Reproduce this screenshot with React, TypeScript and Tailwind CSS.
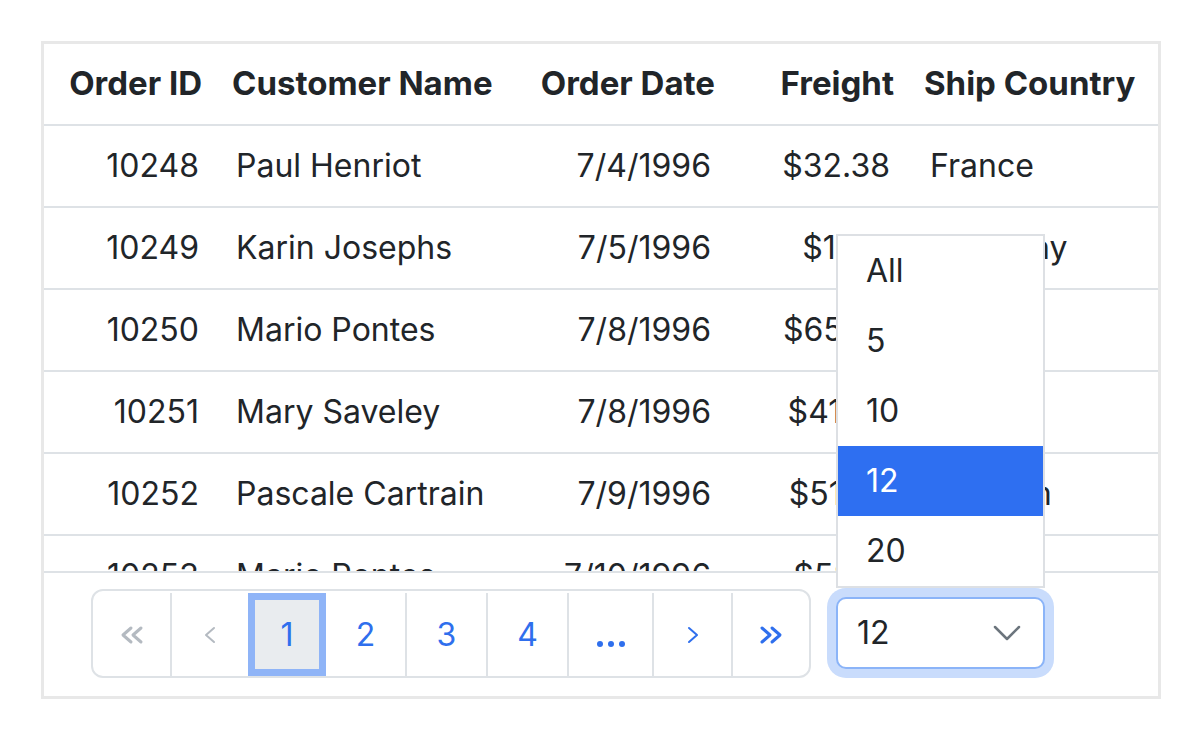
import React from 'react';

interface Order {
  id: number;
  customer: string;
  date: string;
  freight: string;
  country: string;
}

const orders: Order[] = [
  { id: 10248, customer: 'Paul Henriot', date: '7/4/1996', freight: '$32.38', country: 'France' },
  { id: 10249, customer: 'Karin Josephs', date: '7/5/1996', freight: '$11.61', country: 'Germany' },
  { id: 10250, customer: 'Mario Pontes', date: '7/8/1996', freight: '$65.83', country: 'Brazil' },
  { id: 10251, customer: 'Mary Saveley', date: '7/8/1996', freight: '$41.34', country: 'France' },
  { id: 10252, customer: 'Pascale Cartrain', date: '7/9/1996', freight: '$51.30', country: 'Belgium' },
  { id: 10253, customer: 'Mario Pontes', date: '7/10/1996', freight: '$58.17', country: 'Brazil' },
];

const pageSizes = ['All', '5', '10', '12', '20'];

const DoubleChevron: React.FC<{ dir: 'left' | 'right'; color: string }> = ({ dir, color }) => (
  <svg width="24" height="20" viewBox="0 0 24 20" fill="none" stroke={color} strokeWidth={3} strokeLinecap="round" strokeLinejoin="round">
    {dir === 'left' ? (
      <>
        <path d="M11 3 L3 10 L11 17" />
        <path d="M21 3 L13 10 L21 17" />
      </>
    ) : (
      <>
        <path d="M3 3 L11 10 L3 17" />
        <path d="M13 3 L21 10 L13 17" />
      </>
    )}
  </svg>
);

const SingleChevron: React.FC<{ dir: 'left' | 'right'; color: string }> = ({ dir, color }) => (
  <svg width="12" height="18" viewBox="0 0 12 18" fill="none" stroke={color} strokeWidth={2} strokeLinecap="round" strokeLinejoin="round">
    {dir === 'left' ? <path d="M10 2 L2 9 L10 16" /> : <path d="M2 2 L10 9 L2 16" />}
  </svg>
);

const App: React.FC = () => {
  const font = { fontFamily: 'Inter, "Noto Sans", sans-serif' };

  return (
    <div className="w-[1201px] h-[741px] bg-white pt-[41px] pl-[41px] text-[#212529]" style={font}>
      <div className="w-[1120px] h-[658px] border-[3px] border-[#e8e8e8] flex flex-col">
        {/* header */}
        <div className="flex h-[82px] border-b-2 border-[#dee2e6] text-[33px] font-bold items-center shrink-0">
          <div className="w-[172px] pr-[14px] text-right">Order ID</div>
          <div className="w-[292px] pl-[16px] whitespace-nowrap">Customer Name</div>
          <div className="w-[222px] pr-[15px] text-right">Order Date</div>
          <div className="w-[180px] pr-[16px] text-right">Freight</div>
          <div className="flex-1 pl-[14px] whitespace-nowrap">Ship Country</div>
        </div>

        {/* rows */}
        <div className="h-[445px] overflow-hidden shrink-0">
          {orders.map((o) => (
            <div key={o.id} className="flex h-[82px] border-b-2 border-[#dee2e6] text-[32px] items-center">
              <div className="w-[172px] pr-[17px] text-right">{o.id}</div>
              <div className="w-[292px] pl-[20px]">{o.customer}</div>
              <div className="w-[222px] pr-[19px] text-right">{o.date}</div>
              <div className="w-[180px] pr-[20px] text-right">{o.freight}</div>
              <div className="flex-1 pl-[20px]">{o.country}</div>
            </div>
          ))}
        </div>

        {/* footer */}
        <div className="flex-1 border-t-2 border-[#dee2e6] flex items-start pt-[16px] pl-[47px] gap-[25px]">
          <div className="flex h-[89px] w-[720px] border-2 border-[#dee2e6] rounded-[12px] pt-[2px] text-[32px] text-[#2f6fed]">
            <div className="w-[77px] flex items-center justify-center">
              <DoubleChevron dir="left" color="#b4bac1" />
            </div>
            <div className="w-[78px] border-l-2 border-[#dee2e6] flex items-center justify-center">
              <SingleChevron dir="left" color="#b4bac1" />
            </div>
            <div className="w-[78px] border-[7px] border-[#8fb4f7] bg-[#e9ecef] flex items-center justify-center">1</div>
            <div className="w-[79px] flex items-center justify-center">2</div>
            <div className="w-[81px] border-l-2 border-[#dee2e6] flex items-center justify-center">3</div>
            <div className="w-[81px] border-l-2 border-[#dee2e6] flex items-center justify-center">4</div>
            <div className="w-[85px] border-l-2 border-[#dee2e6] flex items-center justify-center pt-[18px]">
              <svg width="30" height="8" viewBox="0 0 30 8" fill="#2f6fed">
                <circle cx="4" cy="4" r="3" />
                <circle cx="15" cy="4" r="3" />
                <circle cx="26" cy="4" r="3" />
              </svg>
            </div>
            <div className="w-[79px] border-l-2 border-[#dee2e6] flex items-center justify-center">
              <SingleChevron dir="right" color="#2f6fed" />
            </div>
            <div className="w-[78px] border-l-2 border-[#dee2e6] flex items-center justify-center">
              <DoubleChevron dir="right" color="#2f6fed" />
            </div>
          </div>

          <div className="relative w-[209px] h-[72px] mt-[8px]">
            <div className="w-full h-full border-2 border-[#8bb4f8] rounded-[10px] ring-[9px] ring-[#c9dcfc] bg-white flex items-center pl-[19px] pr-[22px] text-[32px]">
              <span className="flex-1">12</span>
              <svg width="28" height="16" viewBox="0 0 28 16" fill="none" stroke="#6c757d" strokeWidth={2.5} strokeLinecap="round" strokeLinejoin="round">
                <path d="M2 2 L14 14 L26 2" />
              </svg>
            </div>
            <div className="absolute left-0 bottom-[81px] w-[209px] h-[354px] border-2 border-[#dde0e4] bg-white z-10 text-[32px]">
              {pageSizes.map((s) => (
                <div
                  key={s}
                  className={`h-[70px] flex items-center pl-[28px] ${s === '12' ? 'bg-[#2e6ff1] text-white' : ''}`}
                >
                  {s}
                </div>
              ))}
            </div>
          </div>
        </div>
      </div>
    </div>
  );
};

export default App;
